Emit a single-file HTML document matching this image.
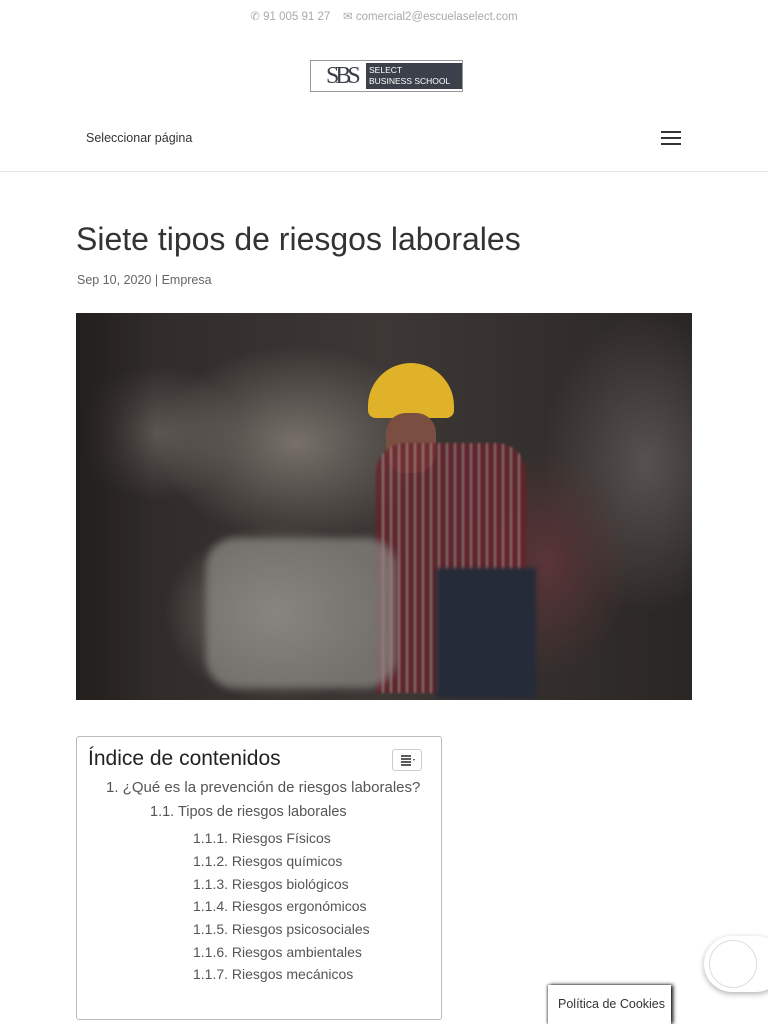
<!DOCTYPE html>
<html><head><meta charset="utf-8"><style>
*{margin:0;padding:0;box-sizing:border-box}
html,body{width:768px;height:1024px;overflow:hidden;background:#fff;font-family:"Liberation Sans",sans-serif;color:#666}
.top{position:absolute;top:9px;left:0;width:768px;text-align:center;font-size:11.5px;color:#aaa}
.logo{position:absolute;left:310px;top:60px;width:153px;height:32px;border:1px solid #999;background:#fff}
.logo .sb{position:absolute;left:15px;top:2px;font-family:"Liberation Serif",serif;font-size:24px;color:#3a3f4a;letter-spacing:-4px}
.logo .dk{position:absolute;left:55px;top:2px;width:96px;height:26px;background:#3b404b;color:#fff;font-size:8.5px;line-height:11px;padding:2px 3px;white-space:nowrap;overflow:hidden}
.nav{position:absolute;left:86px;top:131px;font-size:12.5px;color:#333}
.burger{position:absolute;left:661px;top:131px;width:20px}
.burger i{display:block;height:2px;background:#333;margin-bottom:4px}
.hr{position:absolute;top:171px;left:0;width:768px;height:1px;background:#e5e5e5}
h1{position:absolute;left:76px;top:221px;font-weight:400;font-size:32px;color:#333}
.meta{position:absolute;left:77px;top:273px;font-size:12.5px;color:#666}
.img{position:absolute;left:76px;top:313px;width:616px;height:387px;overflow:hidden;
background:radial-gradient(ellipse 120px 160px at 470px 250px,#5a3438 0%,transparent 70%),
radial-gradient(ellipse 200px 140px at 220px 130px,#77706a 0%,transparent 70%),
radial-gradient(ellipse 150px 120px at 200px 300px,#807a73 0%,transparent 75%),
radial-gradient(ellipse 120px 90px at 80px 120px,#5c5652 0%,transparent 75%),
radial-gradient(ellipse 140px 200px at 570px 150px,#57524f 0%,transparent 75%),
linear-gradient(90deg,#2c2826,#3d3835 50%,#2a2624)}
.toc{position:absolute;left:76px;top:736px;width:366px;height:284px;border:1px solid #bbb;border-radius:3px}
.toc h2{position:absolute;left:11px;top:10px;font-weight:400;font-size:21px;color:#222}
.tbtn{position:absolute;left:315px;top:12px;width:30px;height:22px;border:1px solid #ccc;border-radius:3px}
.toc p{position:absolute;font-size:14px;color:#555;white-space:nowrap}
.cook{position:absolute;left:548px;top:985px;width:123px;height:39px;background:#fff;box-shadow:2px 0 4px #000,-1px 0 2px #888;font-size:12.5px;color:#333;padding:12px 0 0 10px}
.badge{position:absolute;left:704px;top:936px;width:80px;height:56px;border-radius:28px;background:#fff;box-shadow:0 2px 6px rgba(0,0,0,.3)}
.badge i{position:absolute;left:5px;top:4px;width:48px;height:48px;border-radius:50%;border:1px solid #ddd}
</style></head><body>
<div class="top">&#9990; 91 005 91 27 &nbsp;&nbsp; &#9993; comercial2@escuelaselect.com</div>
<div class="logo"><span class="sb">SBS</span><div class="dk">SELECT<br>BUSINESS SCHOOL</div></div>
<div class="nav">Seleccionar página</div>
<div class="burger"><i></i><i></i><i></i></div>
<div class="hr"></div>
<h1>Siete tipos de riesgos laborales</h1>
<div class="meta">Sep 10, 2020 | Empresa</div>
<div class="img">
<div style="position:absolute;left:292px;top:50px;width:86px;height:55px;border-radius:45px 45px 8px 8px;background:#e0b22a"></div>
<div style="position:absolute;left:310px;top:100px;width:50px;height:60px;border-radius:20px;background:#7a4e40"></div>
<div style="position:absolute;left:300px;top:130px;width:150px;height:250px;background:repeating-linear-gradient(90deg,#6a2028 0 6px,#a8949a 6px 8px),#7a2630;opacity:.75;border-radius:30px 30px 0 0;filter:blur(1px)"></div>
<div style="position:absolute;left:360px;top:255px;width:100px;height:130px;background:#252b38;filter:blur(2px)"></div>
<div style="position:absolute;left:130px;top:225px;width:190px;height:150px;background:#8c8985;border-radius:30px;opacity:.7;filter:blur(4px)"></div>
<div style="position:absolute;left:0;top:0;width:80px;height:387px;background:linear-gradient(90deg,#231f1d,transparent)"></div>
</div>
<div class="toc">
<h2>Índice de contenidos</h2>
<div class="tbtn"><svg width="28" height="20" viewBox="0 0 28 20"><g stroke="#333" stroke-width="1.6"><line x1="8" y1="6" x2="18" y2="6"/><line x1="8" y1="9" x2="18" y2="9"/><line x1="8" y1="12" x2="18" y2="12"/><line x1="8" y1="15" x2="18" y2="15"/></g><path d="M20 9l2 0l-1 2z" fill="#333"/></svg></div>
<p style="left:29px;top:42px;font-size:15px">1. ¿Qué es la prevención de riesgos laborales?</p>
<p style="left:73px;top:67px;font-size:14.5px">1.1. Tipos de riesgos laborales</p>
<p style="left:116px;top:93px">1.1.1. Riesgos Físicos</p>
<p style="left:116px;top:116px">1.1.2. Riesgos químicos</p>
<p style="left:116px;top:139px">1.1.3. Riesgos biológicos</p>
<p style="left:116px;top:161px">1.1.4. Riesgos ergonómicos</p>
<p style="left:116px;top:184px">1.1.5. Riesgos psicosociales</p>
<p style="left:116px;top:207px">1.1.6. Riesgos ambientales</p>
<p style="left:116px;top:229px">1.1.7. Riesgos mecánicos</p>
</div>
<div class="badge"><i></i></div>
<div class="cook">Política de Cookies</div>
</body></html>
